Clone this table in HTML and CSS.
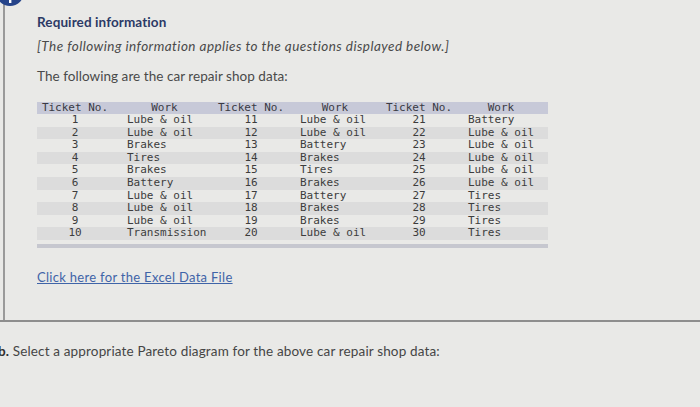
FILE: index.html
```html
<!DOCTYPE html>
<html>
<head>
<meta charset="utf-8">
<link rel="stylesheet" href="styles.css">
</head>
<body>
<div class="page">
  <svg class="badge" width="24" height="8" viewBox="0 0 24 8"><circle cx="10" cy="-8" r="14" fill="#26448a"/><rect x="9" y="0" width="2.4" height="3" fill="#ffffff"/></svg>
  <section class="info">
    <h1 class="req">Required information</h1>
    <p class="note">[The following information applies to the questions displayed below.]</p>
    <p class="lead">The following are the car repair shop data:</p>
    <div class="tablewrap">
      <table class="data">
        <colgroup>
          <col class="c1"><col class="c2"><col class="c3"><col class="c4"><col class="c5"><col class="c6">
        </colgroup>
        <thead>
          <tr><th>Ticket No.</th><th>Work</th><th>Ticket No.</th><th>Work</th><th>Ticket No.</th><th>Work</th></tr>
        </thead>
        <tbody>
          <tr><td class="n">1</td><td class="w">Lube &amp; oil</td><td class="n">11</td><td class="w">Lube &amp; oil</td><td class="n">21</td><td class="w">Battery</td></tr>
          <tr><td class="n">2</td><td class="w">Lube &amp; oil</td><td class="n">12</td><td class="w">Lube &amp; oil</td><td class="n">22</td><td class="w">Lube &amp; oil</td></tr>
          <tr><td class="n">3</td><td class="w">Brakes</td><td class="n">13</td><td class="w">Battery</td><td class="n">23</td><td class="w">Lube &amp; oil</td></tr>
          <tr><td class="n">4</td><td class="w">Tires</td><td class="n">14</td><td class="w">Brakes</td><td class="n">24</td><td class="w">Lube &amp; oil</td></tr>
          <tr><td class="n">5</td><td class="w">Brakes</td><td class="n">15</td><td class="w">Tires</td><td class="n">25</td><td class="w">Lube &amp; oil</td></tr>
          <tr><td class="n">6</td><td class="w">Battery</td><td class="n">16</td><td class="w">Brakes</td><td class="n">26</td><td class="w">Lube &amp; oil</td></tr>
          <tr><td class="n">7</td><td class="w">Lube &amp; oil</td><td class="n">17</td><td class="w">Battery</td><td class="n">27</td><td class="w">Tires</td></tr>
          <tr><td class="n">8</td><td class="w">Lube &amp; oil</td><td class="n">18</td><td class="w">Brakes</td><td class="n">28</td><td class="w">Tires</td></tr>
          <tr><td class="n">9</td><td class="w">Lube &amp; oil</td><td class="n">19</td><td class="w">Brakes</td><td class="n">29</td><td class="w">Tires</td></tr>
          <tr><td class="n">10</td><td class="w">Transmission</td><td class="n">20</td><td class="w">Lube &amp; oil</td><td class="n">30</td><td class="w">Tires</td></tr>
        </tbody>
      </table>
      <div class="tablefoot"></div>
    </div>
    <a class="link" href="#">Click here for the Excel Data File</a>
  </section>
  <hr class="sep">
  <p class="question"><b>b.</b> Select a appropriate Pareto diagram for the above car repair shop data:</p>
</div>
</body>
</html>
```

FILE: styles.css
```css
html, body {
  margin: 0;
  padding: 0;
}
body {
  background: #e9e9e7;
  width: 700px;
  height: 407px;
  overflow: hidden;
  font-family: Lato, "Open Sans", "Liberation Sans", sans-serif;
  color: #454545;
}
.page {
  position: relative;
  height: 407px;
}
.badge {
  position: absolute;
  left: 0;
  top: 0;
}
.info {
  margin-left: 3px;
  border-left: 2px solid #9a9a9a;
  padding: 14px 0 0 32px;
  height: 320px;
  box-sizing: border-box;
  display: flex;
  flex-direction: column;
  align-items: flex-start;
}
.req {
  margin: 0;
  font-size: 13.5px;
  line-height: 16px;
  font-weight: 700;
  color: #2c3a66;
  letter-spacing: 0.1px;
}
.note {
  margin: 8px 0 0;
  font-size: 13.5px;
  line-height: 16px;
  font-style: italic;
  color: #4a4a4a;
  letter-spacing: 0.45px;
}
.lead {
  margin: 14px 0 0;
  font-size: 13.5px;
  line-height: 16px;
  color: #4a4a4a;
  letter-spacing: 0.05px;
}
.tablewrap {
  margin-top: 18px;
  width: 511px;
}
.data {
  border-collapse: collapse;
  table-layout: fixed;
  width: 511px;
  font-family: "DejaVu Sans Mono", "Liberation Mono", monospace;
  font-size: 11px;
  color: #3c3c3c;
}
.c1 { width: 76px; }
.c2 { width: 103px; }
.c3 { width: 70px; }
.c4 { width: 98px; }
.c5 { width: 70px; }
.c6 { width: 94px; }
.data th {
  background: #c7c9d8;
  font-weight: normal;
  text-align: center;
  height: 12px;
  line-height: 12px;
  padding: 0;
  color: #3a3a44;
}
.data td {
  height: 12.6px;
  line-height: 12.6px;
  padding: 0;
  white-space: nowrap;
}
.data tbody tr:nth-child(even) td {
  background: #dcdcdc;
}
.data td.n {
  text-align: center;
}
.data td.w {
  text-align: left;
  padding-left: 14px;
}
.tablefoot {
  margin-top: 4px;
  height: 4px;
  background: #c6c7cf;
}
.link {
  margin-top: 21px;
  font-size: 13px;
  line-height: 16px;
  color: #3f64a8;
  text-decoration: underline;
  letter-spacing: 0.3px;
}
.sep {
  margin: 0;
  border: 0;
  height: 2px;
  background: #8e8e8e;
}
.question {
  margin: 21px 0 0 -2px;
  font-size: 13.5px;
  line-height: 16px;
  color: #454545;
  letter-spacing: 0.15px;
}
.question b {
  color: #2f2f2f;
}
```
